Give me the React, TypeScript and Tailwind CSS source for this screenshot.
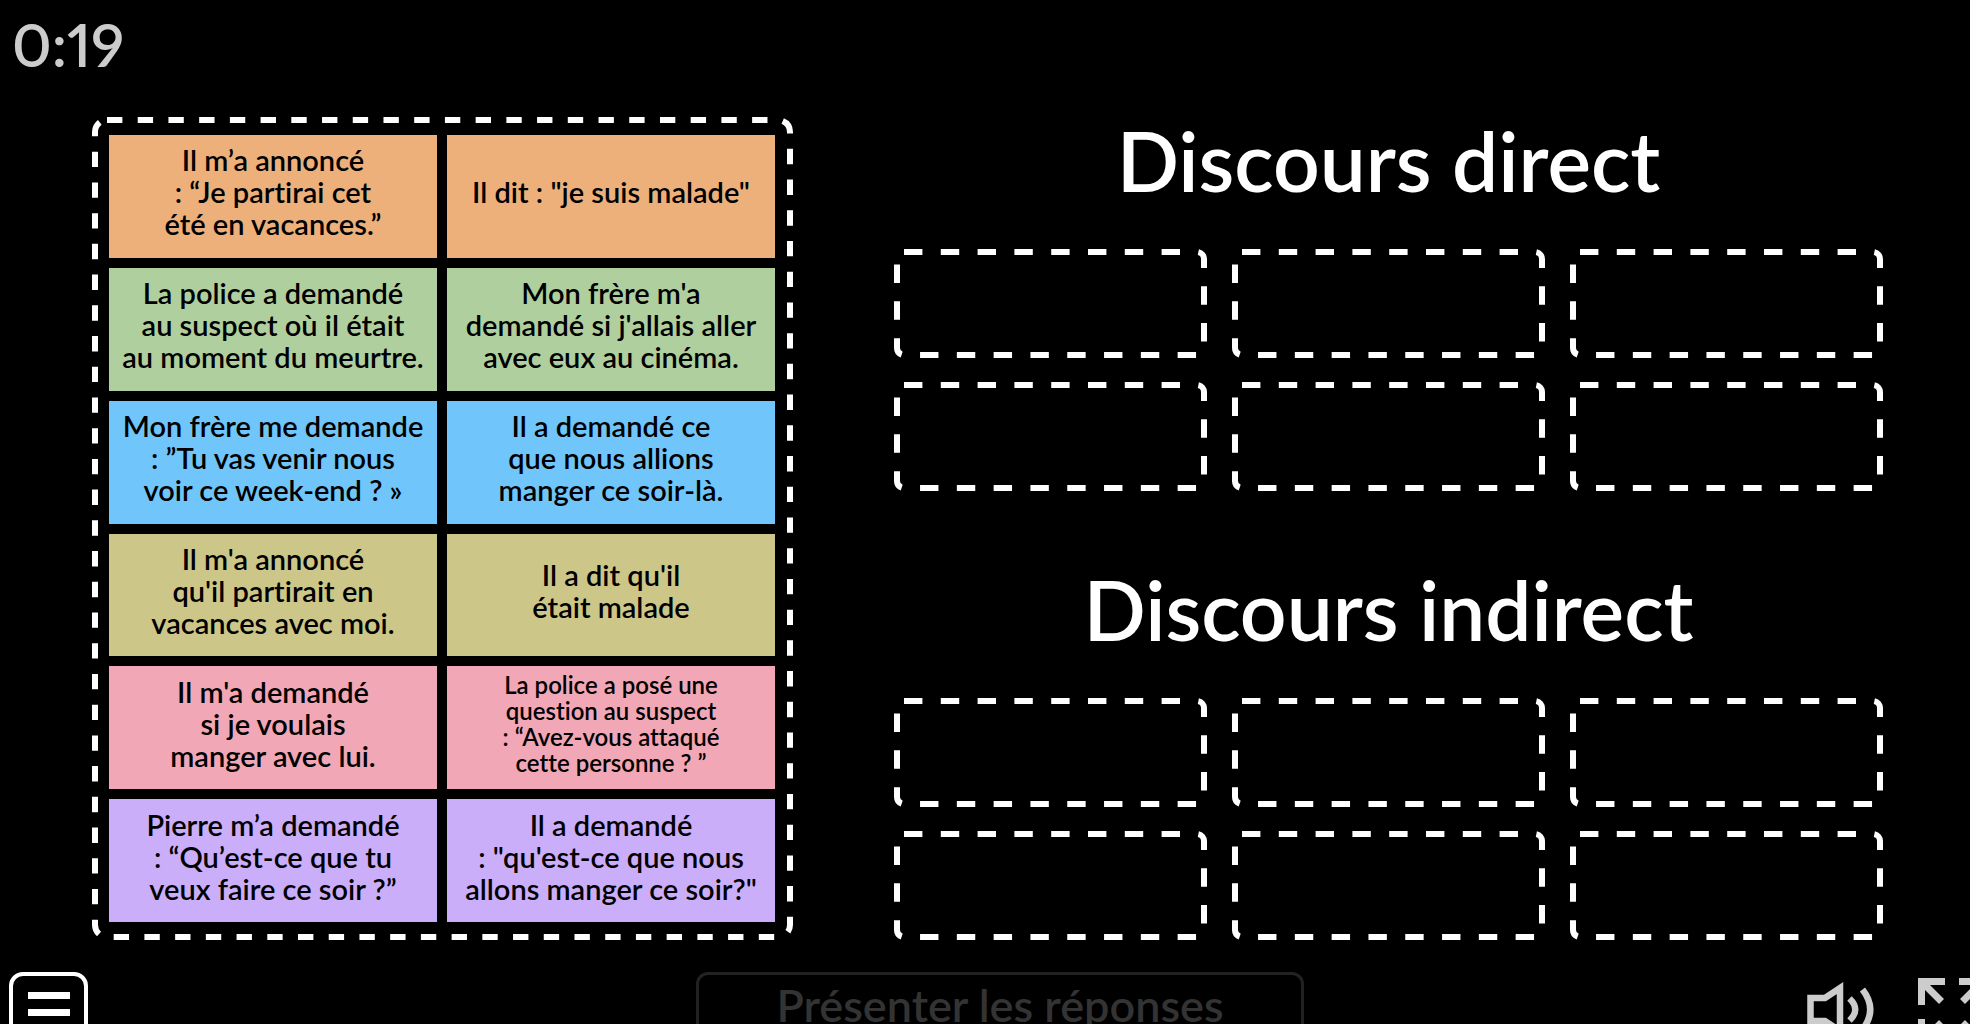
type CardData = { text: string; color: string; small?: boolean };

const cards: CardData[] = [
  { text: "Il m’a annoncé\n: “Je partirai cet\nété en vacances.”", color: "bg-[#edb07b]" },
  { text: "Il dit : \"je suis malade\"", color: "bg-[#edb07b]" },
  { text: "La police a demandé\nau suspect où il était\nau moment du meurtre.", color: "bg-[#b0cf9f]" },
  { text: "Mon frère m'a\ndemandé si j'allais aller\navec eux au cinéma.", color: "bg-[#b0cf9f]" },
  { text: "Mon frère me demande\n: ”Tu vas venir nous\nvoir ce week-end ? »", color: "bg-[#70c6fb]" },
  { text: "Il a demandé ce\nque nous allions\nmanger ce soir-là.", color: "bg-[#70c6fb]" },
  { text: "Il m'a annoncé\nqu'il partirait en\nvacances avec moi.", color: "bg-[#ccc688]" },
  { text: "Il a dit qu'il\nétait malade", color: "bg-[#ccc688]" },
  { text: "Il m'a demandé\nsi je voulais\nmanger avec lui.", color: "bg-[#f2a7b6]" },
  { text: "La police a posé une\nquestion au suspect\n: “Avez-vous attaqué\ncette personne ? ”", color: "bg-[#f2a7b6]", small: true },
  { text: "Pierre m’a demandé\n: “Qu’est-ce que tu\nveux faire ce soir ?”", color: "bg-[#cbaefa]" },
  { text: "Il a demandé\n: \"qu'est-ce que nous\nallons manger ce soir?\"", color: "bg-[#cbaefa]" },
];

function DashedFrame({ radius, dash }: { radius: number; dash: number }) {
  return (
    <svg className="pointer-events-none absolute inset-0 h-full w-full overflow-visible" aria-hidden="true">
      <rect
        width="100%"
        height="100%"
        rx={radius}
        fill="none"
        stroke="#fff"
        strokeWidth="6"
        strokeDasharray={`${dash} ${dash}`}
      />
    </svg>
  );
}

function Card({ text, color, small }: CardData) {
  return (
    <button
      type="button"
      className={`${color} flex items-center justify-center pb-2 text-center font-semibold whitespace-pre text-black [font-variant-ligatures:none] ${
        small ? "text-[24px] leading-[26px]" : "text-[29px] leading-8"
      }`}
    >
      {text}
    </button>
  );
}

function Group({ title }: { title: string }) {
  return (
    <section>
      <h2 className="text-center text-[82px] leading-[86px] font-semibold">{title}</h2>
      <div className="mt-[46px] grid grid-cols-3 gap-x-[25px] gap-y-6">
        {[0, 1, 2, 3, 4, 5].map((slot) => (
          <div key={slot} className="h-[109px] p-[3px]">
            <div className="relative h-full">
              <DashedFrame radius={7} dash={18.4} />
            </div>
          </div>
        ))}
      </div>
    </section>
  );
}

function SpeakerIcon() {
  return (
    <svg width="70" height="60" viewBox="0 0 70 60" fill="none" stroke="#ccc" strokeWidth="6.5">
      <path d="M6.500 20H21L36 10V53L21 43H6.500Z" />
      <path d="M45.500 20.500Q57 31.500 45.500 42.500M58.500 11.500Q74 31.500 58.500 51.500" />
    </svg>
  );
}

function FullscreenIcon() {
  return (
    <svg width="68" height="68" viewBox="0 0 68 68" fill="none" stroke="#ccc" strokeWidth="7">
      <path d="M3.500 27V3.500H27M3.500 3.500L23.500 23.500" />
      <path d="M64.500 27V3.500H41M64.500 3.500L44.500 23.500" />
      <path d="M3.500 41V64.500H27M3.500 64.500L23.500 44.500" />
      <path d="M64.500 41V64.500H41M64.500 64.500L44.500 44.500" />
    </svg>
  );
}

export default function App() {
  return (
    <div className="flex h-screen flex-col overflow-hidden bg-black font-['Lato',sans-serif] text-white">
      <header className="h-[117px] shrink-0 px-3 pt-2">
        <time className="text-[60px] leading-[72px] font-semibold text-[#ccc] proportional-nums">0:19</time>
      </header>

      <main className="grid shrink-0 grid-cols-[701fr_989fr] gap-x-[101px] pr-[87px] pl-[92px]">
        <section className="p-[3px]">
          <div className="relative h-[817px] py-[15px] pr-[15px] pl-[14px]">
            <DashedFrame radius={12} dash={15.36} />
            <div className="relative grid h-full grid-cols-2 grid-rows-6 gap-[10px]">
              {cards.map((card) => (
                <Card key={card.text} {...card} />
              ))}
            </div>
          </div>
        </section>
        <div className="flex flex-col justify-between">
          <Group title="Discours direct" />
          <Group title="Discours indirect" />
        </div>
      </main>

      <footer className="mt-8 -mr-4 grid shrink-0 grid-cols-[687fr_609fr_682fr] items-start pl-[9px]">
        <button
          type="button"
          aria-label="Menu"
          className="flex h-[76px] w-[79px] flex-col items-center gap-[10px] rounded-[14px] border-4 border-white pt-4"
        >
          <span className="h-[7px] w-[42px] bg-white" />
          <span className="h-[7px] w-[42px] bg-white" />
          <span className="h-[7px] w-[42px] bg-white" />
        </button>
        <button
          type="button"
          disabled
          className="h-[76px] rounded-xl border-[3px] border-[#222] pb-3 text-[45px] leading-[60px] font-semibold text-[#333]"
        >
          Présenter les réponses
        </button>
        <div className="flex items-start justify-end gap-11 pt-[6px]">
          <button type="button" aria-label="Son">
            <SpeakerIcon />
          </button>
          <button type="button" aria-label="Plein écran">
            <FullscreenIcon />
          </button>
        </div>
      </footer>
    </div>
  );
}
